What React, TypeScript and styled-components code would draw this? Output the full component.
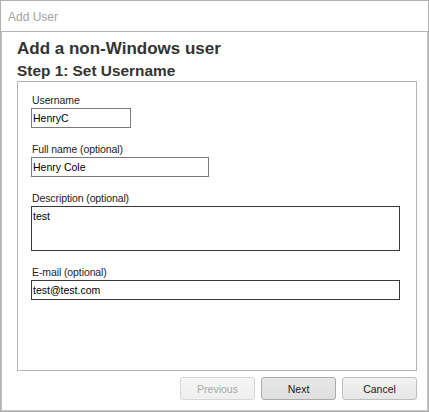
import React from "react";
import styled, { createGlobalStyle } from "styled-components";

const Global = createGlobalStyle`
  html, body { margin: 0; padding: 0; background: #ffffff; }
  * { box-sizing: border-box; }
`;

const Window = styled.div`
  width: 429px;
  height: 412px;
  border: 1px solid #b0b0b0;
  display: flex;
  flex-direction: column;
  background: #ffffff;
  font-family: "Liberation Sans", Arial, sans-serif;
`;

const TitleBar = styled.div`
  height: 31px;
  flex: 0 0 31px;
  border-bottom: 1px solid #b4b4b4;
  display: flex;
  align-items: center;
  padding-left: 7px;
  padding-top: 1px;
  font-size: 12px;
  color: #a3a3a3;
`;

const Body = styled.div`
  flex: 1;
  border-left: 1px solid #c4c4c4;
  border-right: 1px solid #c4c4c4;
  border-bottom: 1px solid #c4c4c4;
  padding: 7px 10px 10px 15px;
  display: flex;
  flex-direction: column;
`;

const Heading = styled.h1`
  margin: 0;
  font-size: 17px;
  line-height: 20px;
  font-weight: bold;
  color: #333333;
`;

const Step = styled.h2`
  margin: 3px 0 0 0;
  font-size: 15.4px;
  line-height: 18px;
  font-weight: bold;
  color: #333333;
`;

const Panel = styled.div`
  margin-top: 1px;
  height: 290px;
  border: 1px solid #b4b4b4;
  padding: 12px 13px 0 13px;
  display: flex;
  flex-direction: column;
  gap: 15px;
`;

const Field = styled.div`
  display: flex;
  flex-direction: column;
`;

const Label = styled.div`
  font-size: 10.5px;
  line-height: 13px;
  color: #222222;
  padding-left: 1px;
  margin-bottom: 1px;
  letter-spacing: -0.1px;
`;

const Input = styled.div<{ $w: number; $h?: number; $dark?: boolean }>`
  width: ${(p) => p.$w}px;
  height: ${(p) => p.$h ?? 20}px;
  border: 1px solid ${(p) => (p.$dark ? "#3a3a3a" : "#7a7a7a")};
  font-size: 10.5px;
  line-height: ${(p) => (p.$h ? "14px" : "18px")};
  padding: ${(p) => (p.$h ? "2px 1px" : "0 1px")};
  color: #000000;
  white-space: pre;
`;

const Buttons = styled.div`
  margin-top: 6px;
  display: flex;
  justify-content: flex-end;
  gap: 6px;
`;

const Button = styled.button<{ $variant?: "disabled" | "default" | "normal" }>`
  width: 75px;
  height: 23px;
  border-radius: 3px;
  font-family: "Liberation Sans", Arial, sans-serif;
  font-size: 10.5px;
  padding: 0;
  border: 1px solid
    ${(p) =>
      p.$variant === "disabled" ? "#d6d6d6" : p.$variant === "default" ? "#acacac" : "#bdbdbd"};
  background: ${(p) =>
    p.$variant === "disabled"
      ? "linear-gradient(#f6f6f6, #efefef)"
      : p.$variant === "default"
      ? "linear-gradient(#e8e8e8, #dedede)"
      : "linear-gradient(#f3f3f3, #e6e6e6)"};
  color: ${(p) => (p.$variant === "disabled" ? "#a8a8a8" : "#1a1a1a")};
`;

export default function App() {
  return (
    <>
      <Global />
      <Window>
        <TitleBar>Add User</TitleBar>
        <Body>
          <Heading>Add a non-Windows user</Heading>
          <Step>Step 1: Set Username</Step>
          <Panel>
            <Field>
              <Label>Username</Label>
              <Input $w={100}>HenryC</Input>
            </Field>
            <Field>
              <Label>Full name (optional)</Label>
              <Input $w={178}>Henry Cole</Input>
            </Field>
            <Field>
              <Label>Description (optional)</Label>
              <Input $w={369} $h={45} $dark>test</Input>
            </Field>
            <Field>
              <Label>E-mail (optional)</Label>
              <Input $w={369} $dark>test@test.com</Input>
            </Field>
          </Panel>
          <Buttons>
            <Button $variant="disabled" disabled>Previous</Button>
            <Button $variant="default">Next</Button>
            <Button $variant="normal">Cancel</Button>
          </Buttons>
        </Body>
      </Window>
    </>
  );
}
